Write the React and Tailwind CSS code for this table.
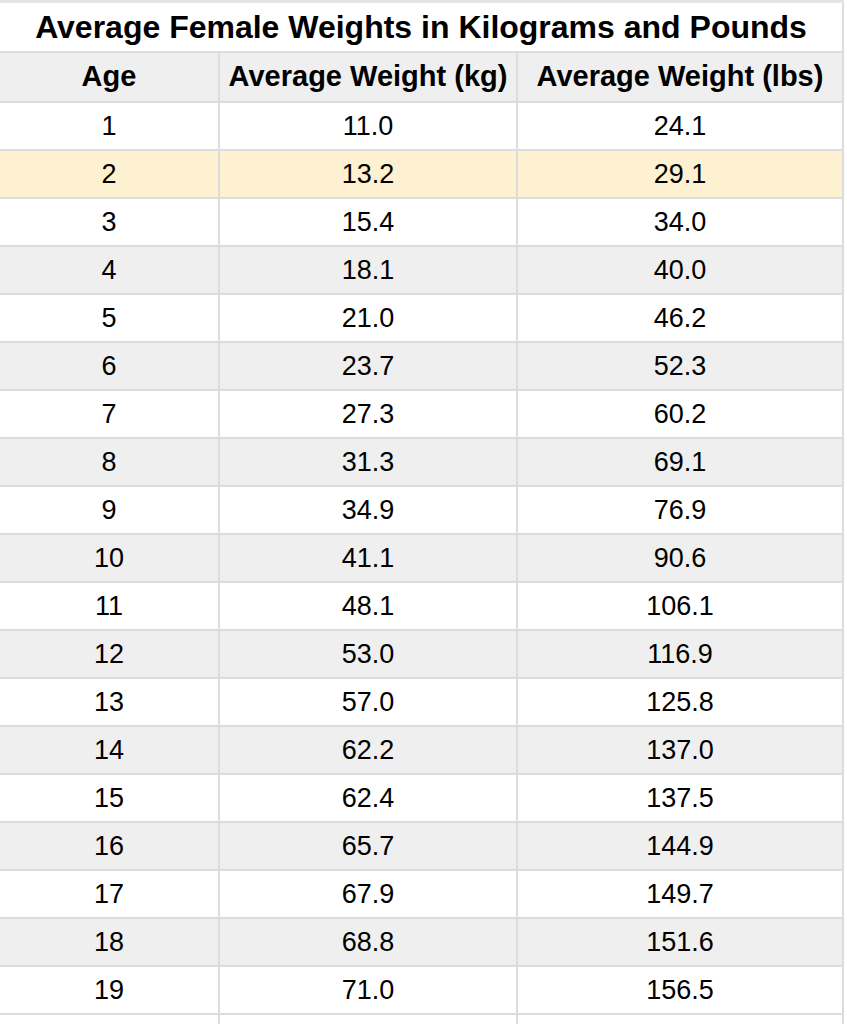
import React from 'react'

const ROWS = [
  [1, '11.0', '24.1'],
  [2, '13.2', '29.1'],
  [3, '15.4', '34.0'],
  [4, '18.1', '40.0'],
  [5, '21.0', '46.2'],
  [6, '23.7', '52.3'],
  [7, '27.3', '60.2'],
  [8, '31.3', '69.1'],
  [9, '34.9', '76.9'],
  [10, '41.1', '90.6'],
  [11, '48.1', '106.1'],
  [12, '53.0', '116.9'],
  [13, '57.0', '125.8'],
  [14, '62.2', '137.0'],
  [15, '62.4', '137.5'],
  [16, '65.7', '144.9'],
  [17, '67.9', '149.7'],
  [18, '68.8', '151.6'],
  [19, '71.0', '156.5'],
  ['', '', ''],
]

// ages 2 is highlighted, other even ages get the grey band
function rowBg(age) {
  if (age === 2) return 'bg-[#fdf1d1]'
  if (typeof age === 'number' && age % 2 === 0) return 'bg-[#efefef]'
  return 'bg-white'
}

const cell = 'flex items-center justify-center border-r-2 border-b-2 border-[#dcdcdc]'

export default function App() {
  return (
    <div className="min-h-screen bg-white font-['Liberation_Sans',Arial,sans-serif] text-black">
      <div className="w-[844px] border-t-[3px] border-[#e4e4e4]">
        <div className={`${cell} h-[50px] text-[32px] font-bold`}>
          Average Female Weights in Kilograms and Pounds
        </div>
        <div className="grid grid-cols-[220px_298px_326px] bg-[#efefef] text-[29px] font-bold">
          <div className={`${cell} h-[50px]`}>Age</div>
          <div className={`${cell} h-[50px]`}>Average Weight (kg)</div>
          <div className={`${cell} h-[50px]`}>Average Weight (lbs)</div>
        </div>
        {ROWS.map(([age, kg, lbs], i) => (
          <div key={i} className={`grid grid-cols-[220px_298px_326px] text-[27px] ${rowBg(age)}`}>
            <div className={`${cell} h-[48px]`}>{age}</div>
            <div className={`${cell} h-[48px]`}>{kg}</div>
            <div className={`${cell} h-[48px]`}>{lbs}</div>
          </div>
        ))}
      </div>
    </div>
  )
}
